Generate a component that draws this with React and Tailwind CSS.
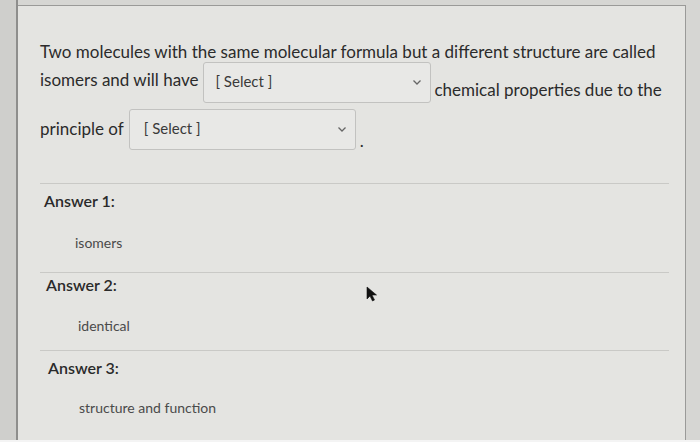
import React from "react";

function Chevron() {
  return (
    <svg width="10" height="7" viewBox="0 0 10 7" className="shrink-0">
      <path d="M1.5 1.5 L5 5 L8.5 1.5" fill="none" stroke="#666" strokeWidth="1.3" />
    </svg>
  );
}

function SelectBox({ w, pl }) {
  return (
    <span
      className={`inline-flex items-center justify-between h-[41px] ${w} border border-[#c2c2c0] rounded-[3px] bg-[#e8e8e6] ${pl} pr-[8px] align-middle`}
    >
      <span className="text-[15px] text-[#3a3a3a] -mt-[3px]">[ Select ]</span>
      <Chevron />
    </span>
  );
}

function Answer({ label, value, pl, vl, pt, pt2, pb }) {
  return (
    <div className="border-t border-[#c9c9c6]">
      <div className={`${pt} ${pl} text-[16px] leading-[24px] font-semibold text-[#2a2a2a]`}>{label}</div>
      <div className={`${pt2} ${pb} ${vl} text-[14px] leading-[20px] text-[#4a4a4a]`}>{value}</div>
    </div>
  );
}

export default function App() {
  return (
    <div
      className="relative w-[700px] h-[442px] overflow-hidden bg-[#d6d6d3] flex"
      style={{ fontFamily: "Lato, 'Open Sans', sans-serif" }}
    >
      <div className="w-[18px] bg-[#cfcfcc] border-r-2 border-[#8e8e8c]" />
      <div className="flex-1 flex flex-col pb-[2px]">
        <div className="flex-1 mt-[5px] mr-[14px] bg-[#e4e4e1] border-t border-r border-[#9a9a98] pl-[22px] pr-[16px]">
          <div className="pt-[34px] text-[17px] leading-[24px] text-[#2b2b2b]">
            <div>Two molecules with the same molecular formula but a different structure are called</div>
            <div className="-mt-[2px] flex items-start">
              <span className="mt-[6px]">isomers and will have</span>
              <span className="ml-[5px]"><SelectBox w="w-[228px]" pl="pl-[11px]" /></span>
              <span className="ml-[3px] mt-[16px]">chemical properties due to the</span>
            </div>
            <div className="mt-[6px] flex items-start">
              <span className="mt-[8px]">principle of</span>
              <span className="ml-[5px]"><SelectBox w="w-[227px]" pl="pl-[14px]" /></span>
              <span className="ml-[4px] mt-[20px]">.</span>
            </div>
          </div>
          <div className="mt-[30px]">
            <Answer label="Answer 1:" value="isomers" pl="pl-[4px]" vl="pl-[35px]" pt="pt-[5px]" pt2="pt-[20px]" pb="pb-[19px]" />
            <Answer label="Answer 2:" value="identical" pl="pl-[6px]" vl="pl-[38px]" pt="pt-[0px]" pt2="pt-[19px]" pb="pb-[14px]" />
            <Answer label="Answer 3:" value="structure and function" pl="pl-[8px]" vl="pl-[39px]" pt="pt-[5px]" pt2="pt-[18px]" pb="pb-[14px]" />
          </div>
        </div>
      </div>
      <div className="absolute left-0 right-0 bottom-0 h-[2px] bg-[#f4f4f4]" />
      <svg className="absolute left-[366px] top-[286px]" width="12" height="16" viewBox="0 0 12 16">
        <path d="M1 1 L1 13 L4 10 L6.5 15 L8.5 14 L6 9 L10.5 9 Z" fill="#111" stroke="#111" strokeWidth="0.6" />
      </svg>
    </div>
  );
}
